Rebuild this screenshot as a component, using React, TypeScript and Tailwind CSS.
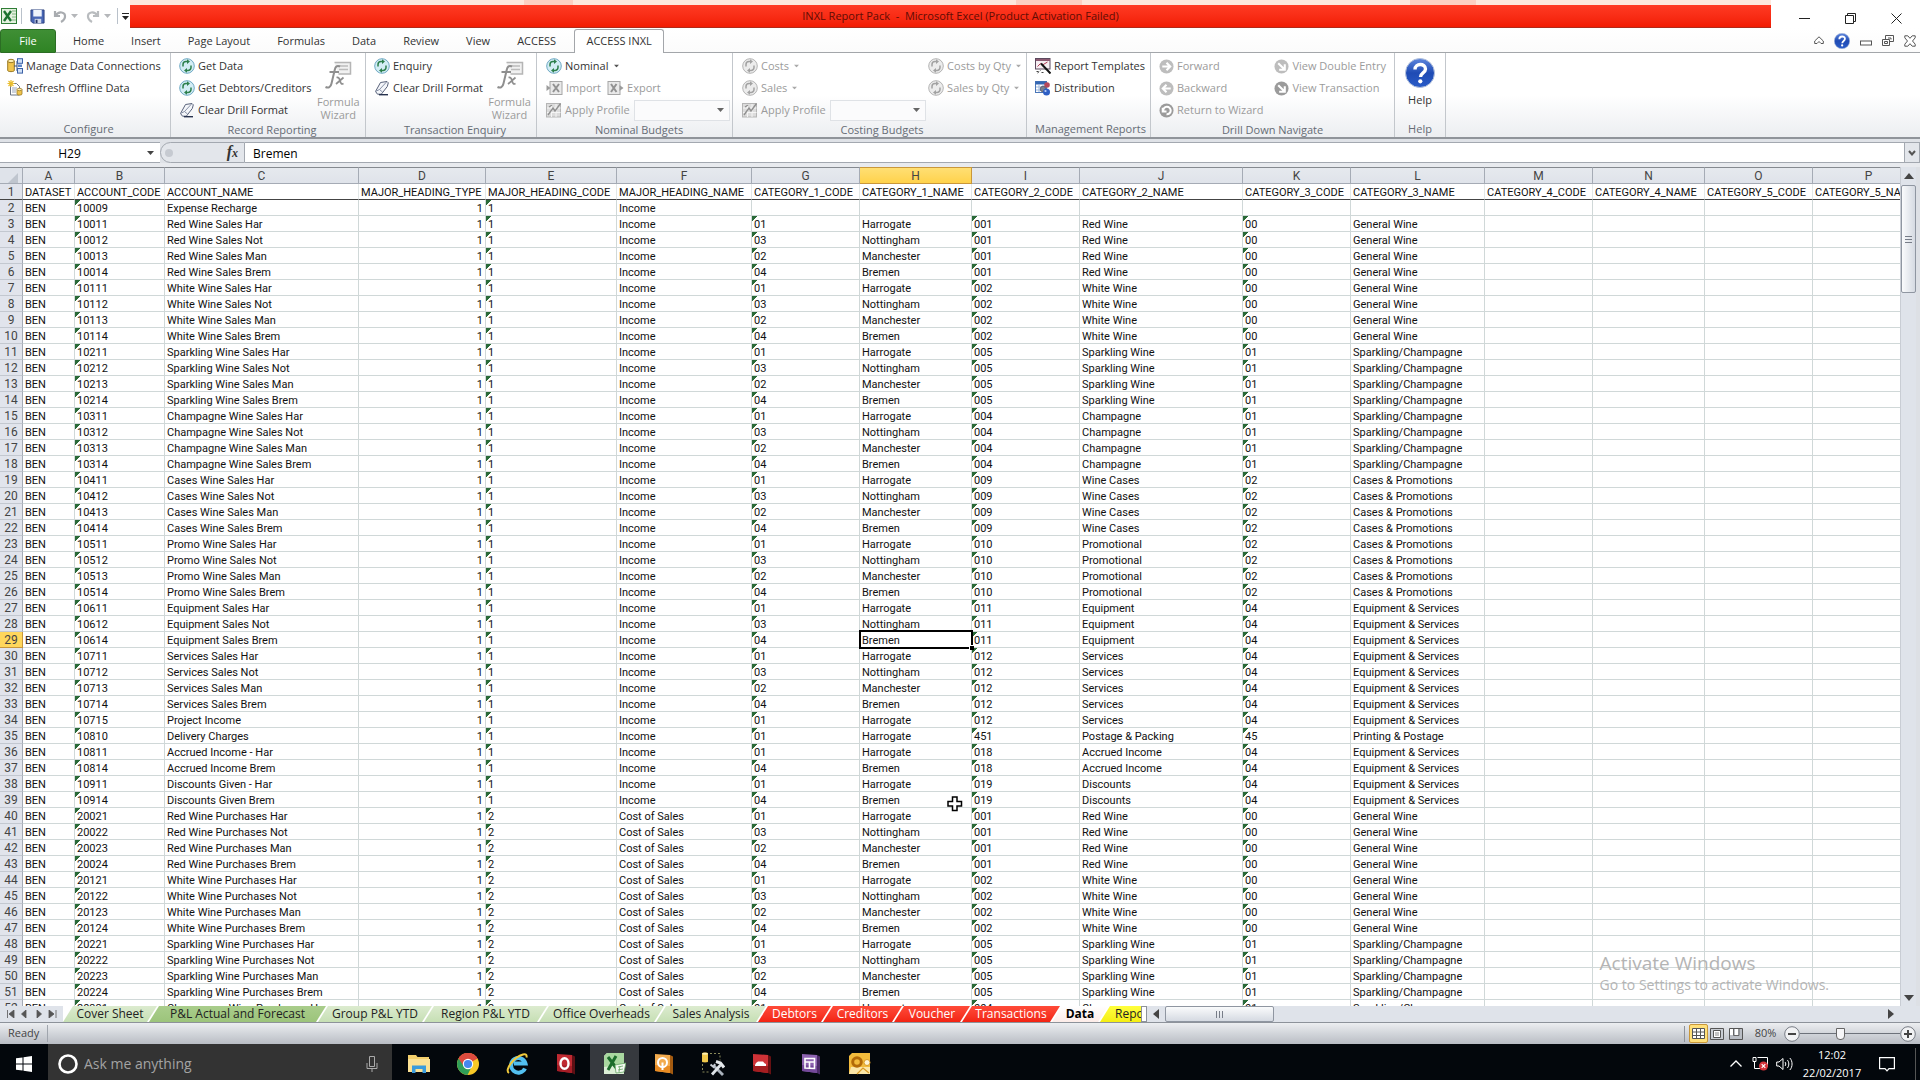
import type { ReactNode } from "react";

type Account = [code: string, name: string, region: string, category: string];

const REGIONS: Record<string, string> = { "01": "Harrogate", "02": "Manchester", "03": "Nottingham", "04": "Bremen" };

const CATEGORIES: Record<string, [string, string, string]> = {
  "001": ["Red Wine", "00", "General Wine"],
  "002": ["White Wine", "00", "General Wine"],
  "004": ["Champagne", "01", "Sparkling/Champagne"],
  "005": ["Sparkling Wine", "01", "Sparkling/Champagne"],
  "009": ["Wine Cases", "02", "Cases & Promotions"],
  "010": ["Promotional", "02", "Cases & Promotions"],
  "011": ["Equipment", "04", "Equipment & Services"],
  "012": ["Services", "04", "Equipment & Services"],
  "018": ["Accrued Income", "04", "Equipment & Services"],
  "019": ["Discounts", "04", "Equipment & Services"],
  "451": ["Postage & Packing", "45", "Printing & Postage"],
};

const ACCOUNTS: Account[] = [
  ["10009", "Expense Recharge", "", ""],
  ["10011", "Red Wine Sales Har", "01", "001"],
  ["10012", "Red Wine Sales Not", "03", "001"],
  ["10013", "Red Wine Sales Man", "02", "001"],
  ["10014", "Red Wine Sales Brem", "04", "001"],
  ["10111", "White Wine Sales Har", "01", "002"],
  ["10112", "White Wine Sales Not", "03", "002"],
  ["10113", "White Wine Sales Man", "02", "002"],
  ["10114", "White Wine Sales Brem", "04", "002"],
  ["10211", "Sparkling Wine Sales Har", "01", "005"],
  ["10212", "Sparkling Wine Sales Not", "03", "005"],
  ["10213", "Sparkling Wine Sales Man", "02", "005"],
  ["10214", "Sparkling Wine Sales Brem", "04", "005"],
  ["10311", "Champagne Wine Sales Har", "01", "004"],
  ["10312", "Champagne Wine Sales Not", "03", "004"],
  ["10313", "Champagne Wine Sales Man", "02", "004"],
  ["10314", "Champagne Wine Sales Brem", "04", "004"],
  ["10411", "Cases Wine Sales Har", "01", "009"],
  ["10412", "Cases Wine Sales Not", "03", "009"],
  ["10413", "Cases Wine Sales Man", "02", "009"],
  ["10414", "Cases Wine Sales Brem", "04", "009"],
  ["10511", "Promo Wine Sales Har", "01", "010"],
  ["10512", "Promo Wine Sales Not", "03", "010"],
  ["10513", "Promo Wine Sales Man", "02", "010"],
  ["10514", "Promo Wine Sales Brem", "04", "010"],
  ["10611", "Equipment Sales Har", "01", "011"],
  ["10612", "Equipment Sales Not", "03", "011"],
  ["10614", "Equipment Sales Brem", "04", "011"],
  ["10711", "Services Sales Har", "01", "012"],
  ["10712", "Services Sales Not", "03", "012"],
  ["10713", "Services Sales Man", "02", "012"],
  ["10714", "Services Sales Brem", "04", "012"],
  ["10715", "Project Income", "01", "012"],
  ["10810", "Delivery Charges", "01", "451"],
  ["10811", "Accrued Income - Har", "01", "018"],
  ["10814", "Accrued Income Brem", "04", "018"],
  ["10911", "Discounts Given - Har", "01", "019"],
  ["10914", "Discounts Given Brem", "04", "019"],
  ["20021", "Red Wine Purchases Har", "01", "001"],
  ["20022", "Red Wine Purchases Not", "03", "001"],
  ["20023", "Red Wine Purchases Man", "02", "001"],
  ["20024", "Red Wine Purchases Brem", "04", "001"],
  ["20121", "White Wine Purchases Har", "01", "002"],
  ["20122", "White Wine Purchases Not", "03", "002"],
  ["20123", "White Wine Purchases Man", "02", "002"],
  ["20124", "White Wine Purchases Brem", "04", "002"],
  ["20221", "Sparkling Wine Purchases Har", "01", "005"],
  ["20222", "Sparkling Wine Purchases Not", "03", "005"],
  ["20223", "Sparkling Wine Purchases Man", "02", "005"],
  ["20224", "Sparkling Wine Purchases Brem", "04", "005"],
  ["20321", "Champagne Wine Purchases Har", "01", "004"],
];

const COLUMNS = [
  { letter: "A", width: 52, title: "DATASET" },
  { letter: "B", width: 90, title: "ACCOUNT_CODE" },
  { letter: "C", width: 194, title: "ACCOUNT_NAME" },
  { letter: "D", width: 127, title: "MAJOR_HEADING_TYPE" },
  { letter: "E", width: 131, title: "MAJOR_HEADING_CODE" },
  { letter: "F", width: 135, title: "MAJOR_HEADING_NAME" },
  { letter: "G", width: 108, title: "CATEGORY_1_CODE" },
  { letter: "H", width: 112, title: "CATEGORY_1_NAME" },
  { letter: "I", width: 108, title: "CATEGORY_2_CODE" },
  { letter: "J", width: 163, title: "CATEGORY_2_NAME" },
  { letter: "K", width: 108, title: "CATEGORY_3_CODE" },
  { letter: "L", width: 134, title: "CATEGORY_3_NAME" },
  { letter: "M", width: 108, title: "CATEGORY_4_CODE" },
  { letter: "N", width: 112, title: "CATEGORY_4_NAME" },
  { letter: "O", width: 108, title: "CATEGORY_5_CODE" },
  { letter: "P", width: 112, title: "CATEGORY_5_NAME" },
];

const TEXT_NUMBER_COLUMNS = ["B", "E", "G", "I", "K"];

function cellsFor([code, name, region, category]: Account): string[] {
  const income = code.startsWith("1");
  const [catName, cat3, cat3Name] = CATEGORIES[category] ?? ["", "", ""];
  return [
    "BEN", code, name, "1", income ? "1" : "2", income ? "Income" : "Cost of Sales",
    region, REGIONS[region] ?? "", category, catName, cat3, cat3Name, "", "", "", "",
  ];
}

/* ---------- icons ---------- */

function RefreshIcon({ off }: { off?: boolean }) {
  const ring = off ? "#b4b4b4" : "#6fa9c4";
  const arrow = off ? "#a2a2a2" : "#2c7f4c";
  return (
    <svg viewBox="0 0 16 16" className="size-4 shrink-0">
      <circle cx="8" cy="8" r="7.3" fill={off ? "#ececec" : "#d3edf5"} stroke={ring} />
      <path d="M8.5 3.5H7a3 3 0 0 0-3 3v2M7.5 12.5H9a3 3 0 0 0 3-3v-2" fill="none" stroke={arrow} strokeWidth="1.5" />
      <path d="M8 1.2 11 3.6 8 6zM8 10 5 12.4 8 14.8z" fill={arrow} />
    </svg>
  );
}

function EraserIcon() {
  return (
    <svg viewBox="0 0 16 16" className="size-4 shrink-0">
      <path d="M6.5 2.5 13 1.5l1.3 1.3-1 3.7-6 7.7H3.5l-2-2.7z" fill="#f4f6fa" stroke="#59627a" />
      <path d="M1.5 11.5l4-2 3 2.500M5.5 9.5l7-7.500" fill="none" stroke="#8791a6" />
      <path d="M5 14.7h9" stroke="#27324e" strokeWidth="1.4" />
    </svg>
  );
}

function ConnectionsIcon() {
  return (
    <svg viewBox="0 0 16 16" className="size-4 shrink-0">
      <path d="M.7 3v9.500c0 1.500 6.600 1.500 6.600 0V3" fill="#f0c44c" stroke="#9a7a25" />
      <ellipse cx="4" cy="3" rx="3.300" ry="1.700" fill="#fdeeb0" stroke="#9a7a25" />
      <path d="M7 8h3M10 3v10M10 3h1M10 13h1" stroke="#39507c" fill="none" />
      <rect x="10.500" y=".7" width="5" height="4.600" fill="#cfe0f7" stroke="#3c61a5" />
      <rect x="10.500" y="10.500" width="5" height="4.600" fill="#cfe0f7" stroke="#3c61a5" />
      <path d="M11 6.500h4v2.500h-4z" fill="#5d86c9" />
    </svg>
  );
}

function OfflineIcon() {
  return (
    <svg viewBox="0 0 16 16" className="size-4 shrink-0">
      <path d="M3.500 3.500h6l3 3v8.500h-9z" fill="#fff" stroke="#6b7484" />
      <path d="M5 8h5M5 10h4M5 12h4" stroke="#9aa6ba" />
      <path d="M4 0v7M.5 3.500h7M1.500 1l5 5M6.500 1l-5 5" stroke="#e9bd2e" strokeWidth="1.200" />
      <path d="M10 9.500v4.700c0 1.200 5 1.200 5 0V9.500z" fill="#f0c44c" stroke="#9a7a25" strokeWidth=".8" />
      <ellipse cx="12.500" cy="9.500" rx="2.500" ry="1.200" fill="#fdeeb0" stroke="#9a7a25" strokeWidth=".8" />
    </svg>
  );
}

function SheetArrowIcon({ out }: { out?: boolean }) {
  return (
    <svg viewBox="0 0 17 16" className="h-4 w-[17px] shrink-0">
      <rect x={out ? 1 : 4} y="1.500" width="12" height="13" fill="#e9e9e9" stroke="#a6a6a6" />
      <path d={out ? "M4 4l5.500 8M9.500 4 4 12" : "M7 4l6 8M13 4l-6 8"} stroke="#929292" strokeWidth="2" />
      <path d={out ? "M12.500 5 16.500 8l-4 3z" : "M.5 5 4.500 8l-4 3z"} fill="#9b9b9b" />
    </svg>
  );
}

function ProfileIcon() {
  return (
    <svg viewBox="0 0 16 16" className="size-4 shrink-0">
      <rect x=".5" y="1.500" width="14" height="13.500" fill="#dcdcdc" stroke="#b5b5b5" />
      <path d="M1 6h13.500M1 10.500h13.500M5.500 2v13M10 2v13" stroke="#f5f5f5" />
      <path d="M2 13 7 6l2 3 5.500-7.500M3 5l3-2" stroke="#909090" strokeWidth="1.400" fill="none" />
    </svg>
  );
}

function TemplatesIcon() {
  return (
    <svg viewBox="0 0 16 16" className="size-4 shrink-0">
      <rect x=".5" y=".5" width="14.500" height="10.500" fill="#f6eef2" stroke="#5c4a5e" />
      <path d="M1 2h14" stroke="#8c5a72" strokeWidth="2" />
      <path d="M2.500 8.500l3-3 2 1.500 5-3" stroke="#b23a52" fill="none" />
      <path d="M1.500 13.500h2M2.500 15l3-2.500M6.500 14.500h2" stroke="#444" strokeDasharray="2 1" />
      <path d="M6 5.500l9.500 10" stroke="#141414" strokeWidth="2" />
    </svg>
  );
}

function DistributionIcon() {
  return (
    <svg viewBox="0 0 16 16" className="size-4 shrink-0">
      <rect x=".5" y="1.500" width="11" height="11" fill="#fff" stroke="#4a76b8" />
      <path d="M.5 3h11" stroke="#3467b3" strokeWidth="3" />
      <path d="M1 7h10M1 10h10M4 4v8M8 4v8" stroke="#9db7dc" />
      <circle cx="12" cy="5" r="2.800" fill="#b5485a" />
      <circle cx="8" cy="9" r="2.800" fill="#7a7f8e" stroke="#3a3f4e" strokeWidth=".6" />
      <circle cx="11.500" cy="12" r="3.500" fill="#2f5fc4" />
      <circle cx="10.500" cy="11" r="1.100" fill="#b9cff7" />
    </svg>
  );
}

function BallIcon({ d, dark }: { d: string; dark?: boolean }) {
  return (
    <svg viewBox="0 0 16 16" className="size-[15px] shrink-0">
      <circle cx="8" cy="8" r="7.500" fill={dark ? "#9b9b9b" : "#bdbdbd"} />
      <path d={d} fill="none" stroke="#fff" strokeWidth="2.200" />
    </svg>
  );
}

const RIGHT = "M3.500 8h8M8 4l4 4-4 4";
const LEFT = "M12.500 8h-8M8 4 4 8l4 4";
const BACK_LOOP = "M4 5v4h4M4.500 8.500A4 4 0 1 1 8 12";
const DOWN_RIGHT = "M4.500 4.500l6 6M11.500 5.500v6h-6";

function HelpBall({ className }: { className: string }) {
  return (
    <svg viewBox="0 0 30 30" className={className}>
      <defs>
        <linearGradient id="help" x1="0" y1="0" x2="0" y2="1">
          <stop offset="0" stopColor="#5e86dd" />
          <stop offset=".5" stopColor="#1f4bb4" />
          <stop offset="1" stopColor="#2a5cc8" />
        </linearGradient>
      </defs>
      <circle cx="15" cy="15" r="14.500" fill="url(#help)" stroke="#b4c2dc" />
      <path d="M10 11.500c0-6.500 10.500-6.500 10.500-.5 0 4-5 3.700-5 8" fill="none" stroke="#fff" strokeWidth="3.400" />
      <circle cx="15.300" cy="23.300" r="2.100" fill="#fff" />
    </svg>
  );
}

function FormulaWizardIcon() {
  return (
    <svg viewBox="0 0 28 28" className="size-7">
      <path d="M10.500 1.500h16v11.500h-12" fill="#f1f1f1" stroke="#b5b5b5" strokeWidth="1.500" />
      <path d="M14 5h10M15 8.500h9" stroke="#bcbcbc" strokeWidth="1.500" />
      <path d="M16 5.500c-3-1.500-4.500 0-5.300 3.500L7.500 22.500C6.800 26 4.500 27.500 1.500 26M5.500 11h9.500" fill="none" stroke="#8f8f8f" strokeWidth="2" />
      <path d="M12.500 16.500c3-.8 3 1.500 3.800 4s1.200 3 3.200 2M19.500 16.500l-7.500 6.500" fill="none" stroke="#8f8f8f" strokeWidth="1.700" />
    </svg>
  );
}

function Caret({ className = "text-[#777]" }: { className?: string }) {
  return (
    <svg viewBox="0 0 7 4" className={`h-1 w-[7px] shrink-0 ${className}`}>
      <path d="M0 0h7L3.500 4z" fill="currentColor" />
    </svg>
  );
}

function ScrollArrow({ className = "" }: { className?: string }) {
  return (
    <svg viewBox="0 0 10 6" className={`h-1.5 w-2.5 shrink-0 text-[#444] ${className}`}>
      <path d="M0 0h10L5 6z" fill="currentColor" />
    </svg>
  );
}

/* ---------- title bar and ribbon ---------- */

function TitleBar() {
  return (
    <header className="flex h-7 shrink-0 bg-white">
      <div className="flex w-[130px] shrink-0 items-center pt-1">
        <svg viewBox="0 0 16 16" className="ml-px size-4 shrink-0">
          <rect x=".5" y=".5" width="15" height="15" fill="#e4f1df" stroke="#2f7d36" />
          <path d="M11 3h4M11 6h4M11 9h4M11 12h4" stroke="#82b582" />
          <path d="M3 3l7 10M10 3 3 13" stroke="#1d7230" strokeWidth="2.400" />
        </svg>
        <span className="mx-1 h-4 w-px bg-[#b9c1ca]" />
        <button aria-label="Save" className="ml-1">
          <svg viewBox="0 0 16 16" className="size-[15px]">
            <path d="M1 1h14v14H3l-2-2z" fill="#4866b4" stroke="#2a3f7d" />
            <path d="M3.500 1h9v7h-9z" fill="#eef3fb" />
            <path d="M5 10.500h7V15H5z" fill="#cfd8ea" />
            <path d="M6 11.500h2V15H6z" fill="#27376b" />
          </svg>
        </button>
        <button aria-label="Undo" className="ml-2 flex items-center gap-1">
          <svg viewBox="0 0 14 14" className="size-3.5">
            <path d="M2 2v5h5M2.500 6.500C6 1.500 12.500 3 12 8c-.3 2.500-2 4-4 5" fill="none" stroke="#a9acb0" strokeWidth="2.200" />
          </svg>
          <Caret className="text-[#b5b7ba]" />
        </button>
        <button aria-label="Redo" className="ml-2 flex items-center gap-1">
          <svg viewBox="0 0 14 14" className="size-3.5 -scale-x-100">
            <path d="M2 2v5h5M2.500 6.500C6 1.500 12.500 3 12 8c-.3 2.500-2 4-4 5" fill="none" stroke="#b9bcbf" strokeWidth="2.200" />
          </svg>
          <Caret className="text-[#b5b7ba]" />
        </button>
        <span className="ml-1.5 h-4 w-px bg-[#b9c1ca]" />
        <button aria-label="Customize Quick Access Toolbar" className="ml-1 flex flex-col items-center gap-0.5">
          <span className="h-px w-[7px] bg-[#222]" />
          <Caret className="text-[#222]" />
        </button>
      </div>
      <div className="flex flex-1 flex-col">
        <div className="h-[5px] bg-[linear-gradient(90deg,#fde8dc_24%,#fcd0c2_24%,#fcd0c2_27%,#fde8dc_27%,#fde8dc_54%,#fcd0c2_54%,#fcd0c2_58%,#fde8dc_58%,#fde8dc_78%,#fcd0c2_78%,#fcd0c2_82%,#fde8dc_82%)]" />
        <div className="flex flex-1 items-center justify-center border-b border-[#b02a1a] bg-linear-to-b from-[#ff3a22] to-[#f21b02]">
          <h1 className="pt-px pl-5 text-[11px] whitespace-pre text-[#5f0d05]">
            INXL Report Pack  -  Microsoft Excel (Product Activation Failed)
          </h1>
        </div>
      </div>
      <div className="flex w-[149px] shrink-0 items-center gap-[35px] pt-2 pl-7 text-[#222]">
        <button aria-label="Minimize">
          <svg viewBox="0 0 11 11" className="size-[11px]"><path d="M0 5.500h11" stroke="currentColor" /></svg>
        </button>
        <button aria-label="Restore">
          <svg viewBox="0 0 11 11" className="size-[11px]">
            <path d="M.5 2.500h8v8h-8zM2.500 2.500v-2h8v8h-2" fill="none" stroke="currentColor" />
          </svg>
        </button>
        <button aria-label="Close">
          <svg viewBox="0 0 11 11" className="size-[11px]"><path d="M.5.5l10 10M10.500.5l-10 10" stroke="currentColor" /></svg>
        </button>
      </div>
    </header>
  );
}

const TABS = ["Home", "Insert", "Page Layout", "Formulas", "Data", "Review", "View", "ACCESS"];

function RibbonTabs() {
  return (
    <nav className="flex h-[25px] shrink-0 items-stretch bg-linear-to-b from-white to-[#fbfbfb] pt-px text-[11px] text-[#333]">
      <button className="w-14 rounded-t-[3px] border border-[#2b6d24] bg-linear-to-b from-[#3f8f35] to-[#2f8424] text-white">File</button>
      <div className="flex gap-[27px] border-b border-[#a3a6aa] pt-px pr-[18px] pl-[17px]">
        {TABS.map((tab) => (
          <button key={tab}>{tab}</button>
        ))}
      </div>
      <button className="w-[90px] rounded-t-[3px] border border-b-0 border-[#a3a6aa] bg-white">ACCESS INXL</button>
      <div className="flex flex-1 items-center justify-end gap-2.5 border-b border-[#a3a6aa] pr-1 text-[#555]">
        <button aria-label="Minimize the Ribbon">
          <svg viewBox="0 0 10 9" className="h-[9px] w-2.5">
            <path d="M5 .8 9.300 5v2.500H7L5 5.500 3 7.500H.7V5z" fill="#fff" stroke="currentColor" />
          </svg>
        </button>
        <button aria-label="Excel Help">
          <HelpBall className="size-4" />
        </button>
        <button aria-label="Minimize workbook">
          <svg viewBox="0 0 12 6" className="mt-1 h-1.5 w-3"><rect x=".5" y="1" width="11" height="4" fill="#fff" stroke="currentColor" /></svg>
        </button>
        <button aria-label="Restore workbook">
          <svg viewBox="0 0 12 12" className="size-3">
            <path d="M3.500 4V.5h8v6H8" fill="none" stroke="currentColor" />
            <path d="M.5 4.500h7v6h-7zM2.500 6.500h3v2h-3zM6 3h3v1.500" fill="none" stroke="currentColor" />
          </svg>
        </button>
        <button aria-label="Close workbook">
          <svg viewBox="0 0 12 12" className="size-3">
            <path d="M.8.8h3L6 3.300 8.200.8h3v2L8.500 6l2.700 3.200v2h-3L6 8.700 3.800 11.200h-3v-2L3.500 6 .8 2.800z" fill="#fff" stroke="currentColor" />
          </svg>
        </button>
      </div>
    </nav>
  );
}

function Command({ icon, label, off, menu }: { icon: ReactNode; label: string; off?: boolean; menu?: boolean }) {
  return (
    <button disabled={off} className={`flex h-[22px] items-center gap-[3px] whitespace-nowrap ${off ? "text-[#9b9b9b]" : "text-[#333]"}`}>
      {icon}
      {label}
      {menu && <Caret className={`ml-px scale-75 ${off ? "text-[#aaa]" : "text-[#555]"}`} />}
    </button>
  );
}

function Group({ title, className, children }: { title: string; className: string; children: ReactNode }) {
  return (
    <section className={`flex shrink-0 flex-col border-r border-[#c3c7cc] pt-0.5 ${className}`}>
      <div className="flex flex-1">{children}</div>
      <h2 className="h-[17px] text-center leading-[17px] whitespace-nowrap text-[#666c75]">{title}</h2>
    </section>
  );
}

function FormulaWizard() {
  return (
    <button disabled className="flex w-[54px] flex-col items-center pt-1.5 leading-[13px] text-[#9b9b9b]">
      <FormulaWizardIcon />
      <span className="mt-1.5">Formula</span>
      <span>Wizard</span>
    </button>
  );
}

function ApplyProfile({ name }: { name: string }) {
  return (
    <div className="flex items-center gap-1">
      <Command icon={<ProfileIcon />} label="Apply Profile" off />
      <span className="relative flex items-center">
        <select aria-label={name} disabled className="h-[21px] w-24 appearance-none border border-[#dfe2e6] bg-[#fbfbfc]" />
        <span className="pointer-events-none absolute right-1.5">
          <Caret className="text-[#666]" />
        </span>
      </span>
    </div>
  );
}

function Ribbon() {
  return (
    <div className="flex h-[86px] shrink-0 border-b-2 border-[#90949a] bg-linear-to-b from-white from-50% to-[#eceef1] text-[11px]">
      <Group title="Configure" className="w-[171px] pl-[7px]">
        <div>
          <Command icon={<ConnectionsIcon />} label="Manage Data Connections" />
          <Command icon={<OfflineIcon />} label="Refresh Offline Data" />
        </div>
      </Group>
      <Group title="Record Reporting" className="w-[195px] pl-2">
        <div className="flex-1">
          <Command icon={<RefreshIcon />} label="Get Data" />
          <Command icon={<RefreshIcon />} label="Get Debtors/Creditors" />
          <Command icon={<EraserIcon />} label="Clear Drill Format" />
        </div>
        <FormulaWizard />
      </Group>
      <Group title="Transaction Enquiry" className="w-[171px] pl-2">
        <div className="flex-1">
          <Command icon={<RefreshIcon />} label="Enquiry" />
          <Command icon={<EraserIcon />} label="Clear Drill Format" />
        </div>
        <FormulaWizard />
      </Group>
      <Group title="Nominal Budgets" className="w-[196px] pl-[9px]">
        <div>
          <Command icon={<RefreshIcon />} label="Nominal" menu />
          <div className="flex gap-1.5">
            <Command icon={<SheetArrowIcon />} label="Import" off />
            <Command icon={<SheetArrowIcon out />} label="Export" off />
          </div>
          <ApplyProfile name="Nominal profile" />
        </div>
      </Group>
      <Group title="Costing Budgets" className="w-[294px] pr-1 pl-[9px]">
        <div className="flex-1">
          <Command icon={<RefreshIcon off />} label="Costs" off menu />
          <Command icon={<RefreshIcon off />} label="Sales" off menu />
          <ApplyProfile name="Costing profile" />
        </div>
        <div>
          <Command icon={<RefreshIcon off />} label="Costs by Qty" off menu />
          <Command icon={<RefreshIcon off />} label="Sales by Qty" off menu />
        </div>
      </Group>
      <Group title="Management Reports" className="w-[124px] px-2">
        <div>
          <Command icon={<TemplatesIcon />} label="Report Templates" />
          <Command icon={<DistributionIcon />} label="Distribution" />
        </div>
      </Group>
      <Group title="Drill Down Navigate" className="w-[244px] px-2">
        <div className="flex-1">
          <Command icon={<BallIcon d={RIGHT} />} label="Forward" off />
          <Command icon={<BallIcon d={LEFT} />} label="Backward" off />
          <Command icon={<BallIcon d={BACK_LOOP} dark />} label="Return to Wizard" off />
        </div>
        <div>
          <Command icon={<BallIcon d={DOWN_RIGHT} />} label="View Double Entry" off />
          <Command icon={<BallIcon d={DOWN_RIGHT} dark />} label="View Transaction" off />
        </div>
      </Group>
      <Group title="Help" className="w-[51px]">
        <button className="flex flex-1 flex-col items-center gap-1 pt-[3px] text-[#333]">
          <HelpBall className="size-[30px]" />
          Help
        </button>
      </Group>
    </div>
  );
}

function FormulaBar() {
  return (
    <div className="flex h-7 shrink-0 items-stretch border-b-4 border-[#e8eaee] bg-[#dfe2e7] pt-[3px] text-xs">
      <div className="flex w-40 shrink-0 items-center border-y border-[#a3a8b0] bg-white pr-1.5">
        <input aria-label="Name Box" defaultValue="H29" className="w-full min-w-0 pt-0.5 pr-2 text-center" />
        <Caret className="text-[#444]" />
      </div>
      <div className="flex w-[85px] shrink-0 items-center justify-between rounded-l-full border border-[#a3a8b0] bg-[#e3e6eb] pr-1.5 pl-1">
        <span className="size-2 rounded-full bg-[#c6cad1]" />
        <button aria-label="Insert Function" className="font-['Liberation_Serif',serif] text-base leading-4 font-bold text-[#333] italic">
          f<span className="text-xs">x</span>
        </button>
      </div>
      <input aria-label="Formula Bar" defaultValue="Bremen" className="min-w-0 flex-1 border-y border-[#a3a8b0] bg-white pt-0.5 pl-2" />
      <button aria-label="Expand Formula Bar" className="flex w-4 items-center justify-center border border-[#a3a8b0] bg-[#e3e6eb]">
        <svg viewBox="0 0 8 6" className="h-1.5 w-2"><path d="M1 1l3 3.500L7 1" fill="none" stroke="#555" strokeWidth="2" /></svg>
      </button>
    </div>
  );
}

/* ---------- worksheet ---------- */

function Sheet() {
  return (
    <div className="relative min-h-0 min-w-0 flex-1 overflow-hidden bg-white">
      <table className="w-[1925px] table-fixed border-separate border-spacing-0 font-[Roboto,sans-serif] text-[11px] leading-[13px] text-[#111]">
        <colgroup>
          <col className="w-[23px]" />
          {COLUMNS.map((c) => (
            <col key={c.letter} style={{ width: c.width }} />
          ))}
        </colgroup>
        <thead>
          <tr className="h-[17px] text-[#444]">
            <th aria-label="Select all" className="border-t border-r border-b border-[#a5abb5] border-t-[#85898f] bg-[#dfe3ea] p-0">
              <svg viewBox="0 0 10 10" className="mt-1 mr-1 ml-auto size-2.5"><path d="M10 0v10H0z" fill="#bfc5ce" /></svg>
            </th>
            {COLUMNS.map((c) => (
              <th
                key={c.letter}
                className={`border-t border-r border-b p-0 pt-0.5 text-xs leading-[13px] font-normal ${
                  c.letter === "H"
                    ? "border-[#c9973a] bg-linear-to-b from-[#ffdf73] to-[#ffd24a]"
                    : "border-[#a5abb5] border-t-[#85898f] bg-linear-to-b from-[#e6e9ee] to-[#dfe3ea]"
                }`}
              >
                {c.letter}
              </th>
            ))}
          </tr>
        </thead>
        <tbody>
          <tr className="h-4">
            <th className="border-r border-b border-[#a5abb5] border-b-[#444] bg-[#e1e4ec] p-0 pt-0.5 text-xs leading-[13px] font-normal text-[#444]">1</th>
            {COLUMNS.map((c) => (
              <td key={c.letter} className="border-r border-b border-r-[#e3e8e8] border-b-[#444] p-0 pt-0.5 pl-0.5 whitespace-nowrap">
                {c.title}
              </td>
            ))}
          </tr>
          {ACCOUNTS.map((account, i) => {
            const rowNumber = i + 2;
            const active = rowNumber === 29;
            return (
              <tr key={account[0]} className="h-4">
                <th
                  className={`border-r border-b p-0 pt-0.5 text-xs leading-[13px] font-normal text-[#444] ${
                    active ? "border-[#c9973a] bg-[#ffd75c]" : "border-[#a5abb5] border-b-[#c3c8d0] bg-[#e1e4ec]"
                  }`}
                >
                  {rowNumber}
                </th>
                {cellsFor(account).map((value, j) => {
                  const { letter } = COLUMNS[j];
                  const flagged = value !== "" && TEXT_NUMBER_COLUMNS.includes(letter);
                  const selected = active && letter === "H";
                  return (
                    <td
                      key={letter}
                      className={`border-r border-b border-[#d0d8d8] p-0 px-0.5 pt-0.5 whitespace-nowrap ${letter === "D" ? "text-right" : ""} ${
                        flagged ? "bg-[linear-gradient(135deg,#2a6a38_4px,transparent_4px)]" : ""
                      } ${selected ? "relative" : ""}`}
                    >
                      {value}
                      {selected && (
                        <span className="absolute -top-0.5 -right-0.5 -bottom-0.5 -left-px border-2 border-black">
                          <span className="absolute -right-[3px] -bottom-[3px] size-[5px] border-t border-l border-white bg-black" />
                        </span>
                      )}
                    </td>
                  );
                })}
              </tr>
            );
          })}
        </tbody>
      </table>
      <div className="absolute right-[71px] bottom-[11px] text-[#b4b4b4]">
        <p className="text-[19px] leading-6">Activate Windows</p>
        <p className="text-sm leading-5">Go to Settings to activate Windows.</p>
      </div>
    </div>
  );
}

function VerticalScrollbar() {
  return (
    <div className="flex w-5 shrink-0 flex-col border-r-4 border-l border-[#c9cdd4] border-r-[#dde0e5] bg-[#dfe3ea]">
      <button aria-label="Scroll up" className="flex h-[18px] items-center justify-center">
        <ScrollArrow className="rotate-180" />
      </button>
      <div className="flex h-[108px] flex-col items-center justify-center gap-0.5 rounded-xs border border-[#8f96a1] bg-linear-to-r from-[#fafbfc] to-[#d5dae2]">
        <span className="h-px w-[7px] bg-[#777d88]" />
        <span className="h-px w-[7px] bg-[#777d88]" />
        <span className="h-px w-[7px] bg-[#777d88]" />
      </div>
      <button aria-label="Scroll down" className="mt-auto flex h-4 items-center justify-center">
        <ScrollArrow />
      </button>
    </div>
  );
}

const GREEN = "from-[#dcebcf] to-[#c6dfb4] text-[#222]";
const RED = "from-[#ff4a38] to-[#f22312] text-white";

const SHEETS = [
  { name: "Cover Sheet", width: "w-[94px]", tone: GREEN },
  { name: "P&L Actual and Forecast", width: "w-[177px]", tone: "from-[#a9cd8b] to-[#9cc47b] text-[#222]" },
  { name: "Group P&L YTD", width: "w-[114px]", tone: GREEN },
  { name: "Region P&L YTD", width: "w-[123px]", tone: GREEN },
  { name: "Office Overheads", width: "w-[125px]", tone: GREEN },
  { name: "Sales Analysis", width: "w-[110px]", tone: GREEN },
  { name: "Debtors", width: "w-[73px]", tone: RED },
  { name: "Creditors", width: "w-[79px]", tone: RED },
  { name: "Voucher", width: "w-[76px]", tone: RED },
  { name: "Transactions", width: "w-[98px]", tone: RED },
  { name: "Data", width: "w-[56px]", tone: "from-white to-[#fdece8] text-black font-bold" },
  { name: "Report", width: "w-[68px]", tone: "from-[#ffff3c] to-[#f5ee10] text-[#222]" },
];

function SheetTabs() {
  return (
    <div className="flex h-[17px] shrink-0 border-b border-[#8d929a] bg-[#dfe3ea]">
      <div className="flex w-[63px] shrink-0 items-center justify-around px-1 text-[#555]">
        {["M1.500 0v8M8 0v8L3 4z", "M6 0v8L1.500 4z", "M3 0v8l4.500-4z", "M8 0v8M1 0v8l5-4z"].map((d, i) => (
          <button key={d} aria-label={["First sheet", "Previous sheet", "Next sheet", "Last sheet"][i]}>
            <svg viewBox="0 0 9 8" className="h-2 w-[9px]"><path d={d} fill="currentColor" stroke="currentColor" strokeWidth=".8" /></svg>
          </button>
        ))}
      </div>
      <div className="flex w-[1078px] shrink-0 overflow-hidden bg-white text-xs leading-4">
        {SHEETS.map((s) => (
          <button
            key={s.name}
            className={`-mr-2 shrink-0 bg-linear-to-b whitespace-nowrap [clip-path:polygon(10px_0,100%_0,calc(100%-10px)_100%,0_100%)] ${s.width} ${s.tone}`}
          >
            {s.name}
          </button>
        ))}
      </div>
      <span className="w-1.5 border border-[#8d929a] bg-white" />
      <button aria-label="Scroll left" className="flex w-[18px] items-center justify-center">
        <ScrollArrow className="rotate-90" />
      </button>
      <div className="flex w-[109px] items-center justify-center gap-0.5 rounded-xs border border-[#8f96a1] bg-linear-to-b from-[#fafbfc] to-[#d5dae2]">
        <span className="h-[7px] w-px bg-[#777d88]" />
        <span className="h-[7px] w-px bg-[#777d88]" />
        <span className="h-[7px] w-px bg-[#777d88]" />
      </div>
      <button aria-label="Scroll right" className="mr-6 ml-auto">
        <ScrollArrow className="-rotate-90" />
      </button>
    </div>
  );
}

function StatusBar() {
  return (
    <div className="flex h-[21px] shrink-0 items-center bg-linear-to-b from-[#eceef1] to-[#b9bdc4] text-[11px] text-[#444]">
      <span className="w-12 border-r border-[#a0a5ad] pl-2">Ready</span>
      <span className="ml-auto h-4 w-px bg-[#8d929a]" />
      <div className="ml-1 flex items-center">
        <button aria-label="Normal view" className="flex size-[19px] items-center justify-center rounded-xs border border-[#c9973a] bg-[#ffe07a]">
          <svg viewBox="0 0 13 11" className="h-[11px] w-[13px]">
            <path d="M.5.500h12v10H.500zM.500 4h12M.500 7.500h12M4.500.500v10M8.500.500v10" fill="#fff" stroke="#555" />
          </svg>
        </button>
        <button aria-label="Page layout view" className="ml-0.5">
          <svg viewBox="0 0 14 12" className="h-3 w-3.5">
            <path d="M.500.500h13v11H.500z" fill="#c9cdd3" stroke="#555" />
            <path d="M3.500 2.500h7v7h-7z" fill="#fff" stroke="#555" />
            <path d="M5 5h4M5 7h4" stroke="#888" />
          </svg>
        </button>
        <button aria-label="Page break preview" className="ml-[5px]">
          <svg viewBox="0 0 14 12" className="h-3 w-3.5">
            <path d="M.500.500h13v11H.500z" fill="#b9bdc4" stroke="#555" />
            <path d="M1 1h3v6H1zM6 1h3v6H6z" fill="#fff" />
            <path d="M4.500 1v6.500H10V1" fill="none" stroke="#666" />
          </svg>
        </button>
      </div>
      <button className="mr-1 ml-2 w-[29px]">80%</button>
      <ZoomButton label="Zoom out" d="M4 8h8" />
      <input
        type="range"
        aria-label="Zoom"
        min="10"
        max="400"
        defaultValue="164"
        className="h-4 w-[100px] appearance-none bg-[linear-gradient(#6d727a,#6d727a)] bg-[length:100%_1px] bg-center bg-no-repeat [&::-webkit-slider-thumb]:h-3 [&::-webkit-slider-thumb]:w-[9px] [&::-webkit-slider-thumb]:appearance-none [&::-webkit-slider-thumb]:rounded-b-[4px] [&::-webkit-slider-thumb]:border [&::-webkit-slider-thumb]:border-[#666] [&::-webkit-slider-thumb]:bg-[#f6f6f8]"
      />
      <ZoomButton label="Zoom in" d="M4 8h8M8 4v8" />
      <span className="w-1" />
    </div>
  );
}

function ZoomButton({ label, d }: { label: string; d: string }) {
  return (
    <button aria-label={label}>
      <svg viewBox="0 0 16 16" className="size-4">
        <circle cx="8" cy="8" r="7.300" fill="#f1f2f4" stroke="#777c85" />
        <path d={d} stroke="#444" strokeWidth="2" />
      </svg>
    </button>
  );
}

/* ---------- taskbar ---------- */

function Badge({ from, to, side, children }: { from: string; to: string; side: string; children: ReactNode }) {
  return (
    <svg viewBox="0 0 22 22" className="size-[22px]">
      <path d="M2 1l15 1v18L2 18z" fill={from} />
      <path d="M17 2l3 1.500v18L17 20z" fill={side} />
      <path d="M2 12l15 1v7L2 18z" fill={to} />
      {children}
    </svg>
  );
}

const APPS: { name: string; active?: boolean; icon: ReactNode }[] = [
  {
    name: "File Explorer",
    icon: (
      <svg viewBox="0 0 22 20" className="h-5 w-[22px]">
        <path d="M0 1h8l1.500 2H21v15H0z" fill="#f3cf6c" />
        <path d="M0 5h22v13H0z" fill="#fbe194" />
        <path d="M4 11.500h14V19h-3.500v-4h-7v4H4z" fill="#3a9bdc" />
      </svg>
    ),
  },
  {
    name: "Google Chrome",
    icon: (
      <svg viewBox="0 0 22 22" className="size-[22px]">
        <circle cx="11" cy="11" r="11" fill="#f9c927" />
        <path d="M11 11 1.500 5.500A11 11 0 0 1 20.500 5.500z" fill="#dd4b3e" />
        <path d="M11 11 1.500 5.500A11 11 0 0 0 10.500 22L15 13z" fill="#2f9e58" />
        <path d="M11 6h9.800a11 11 0 0 0-19.300-.5L6 12z" fill="#dd4b3e" />
        <circle cx="11" cy="11" r="5.200" fill="#fff" />
        <circle cx="11" cy="11" r="4.100" fill="#4587ee" />
      </svg>
    ),
  },
  {
    name: "Internet Explorer",
    icon: (
      <svg viewBox="0 0 22 22" className="size-[22px]">
        <path d="M19 15.500a7.300 7.300 0 1 1 .5-5H8" fill="none" stroke="#52bff0" strokeWidth="4" />
        <path d="M3 20C-2 17 8 4 17 1.500c3-.8 4 .5 3.500 3" fill="none" stroke="#f0c93c" strokeWidth="2" />
      </svg>
    ),
  },
  {
    name: "Finance",
    icon: (
      <Badge from="#c02a32" to="#a51d26" side="#5e1015">
        <ellipse cx="9.500" cy="10.500" rx="4" ry="5.300" fill="none" stroke="#fff" strokeWidth="2.400" />
      </Badge>
    ),
  },
  {
    name: "Excel",
    active: true,
    icon: (
      <svg viewBox="0 0 22 22" className="size-[22px]">
        <path d="M3 0h17v21H0V3z" fill="#dcefd6" />
        <path d="M3 0h17v12L0 14V3z" fill="#a9d79f" />
        <path d="M4 4l9 12M12 3 4 17" stroke="#1c6d2b" strokeWidth="3" />
        <path d="M11 12l11-2-2 9-8 1z" fill="#f4faf2" stroke="#66a565" strokeWidth=".8" />
        <path d="M14 14l5-1M14 17l5-1M16 13l-1 6" stroke="#66a565" strokeWidth=".8" />
      </svg>
    ),
  },
  {
    name: "Access Client",
    icon: (
      <Badge from="#f3ab4e" to="#e98b22" side="#a35a10">
        <circle cx="9.500" cy="9.500" r="4.500" fill="none" stroke="#fff" strokeWidth="2" />
        <path d="M8.500 9.500h2V17h-2z" fill="#fff" />
      </Badge>
    ),
  },
  {
    name: "Database Tools",
    icon: (
      <svg viewBox="0 0 24 24" className="size-6">
        <path d="M1 1.500c0-1.200 6-1.200 6 0v8c0 1.200-6 1.200-6 0z" fill="#f1c84b" />
        <ellipse cx="4" cy="1.800" rx="3" ry="1" fill="#fdf0b4" />
        <path d="M9 1.500h10v7M1.500 12v8h8" fill="none" stroke="#8a8a5a" strokeDasharray="2 2" />
        <path d="M12.500 13.500 22 23" stroke="#aab2bc" strokeWidth="2.800" />
        <path d="M11 22.500 19.500 13" stroke="#dfe4e9" strokeWidth="2.800" />
        <path d="M15 9.500l4.500 1.500 3.500 4.500" fill="none" stroke="#e4e8ec" strokeWidth="3" />
        <path d="M9.500 12.500l3 2.500 1.500-3" fill="none" stroke="#c8ced6" strokeWidth="2" />
      </svg>
    ),
  },
  {
    name: "Fleet",
    icon: (
      <Badge from="#cf3237" to="#a51d20" side="#661012">
        <path d="M4 12l1-2 2-1.500h5l1.500 1.800 1.500.7v2H4z" fill="#fff" />
      </Badge>
    ),
  },
  {
    name: "Planner",
    icon: (
      <Badge from="#8d63b0" to="#74489a" side="#4b2b68">
        <path d="M5 5.500h9.500v10L5 15z" fill="none" stroke="#fff" strokeWidth="1.600" />
        <path d="M5 9h9.500M9.500 9v6.500" stroke="#fff" strokeWidth="1.600" />
      </Badge>
    ),
  },
  {
    name: "Outlook",
    icon: (
      <svg viewBox="0 0 22 22" className="size-[22px]">
        <path d="M3 0h18v21H0V3z" fill="#f3bb3c" />
        <path d="M2 14h19v7H0z" fill="#fbe6a8" />
        <circle cx="8" cy="9" r="4.300" fill="none" stroke="#b36a08" strokeWidth="3" />
        <circle cx="18" cy="9.500" r="3" fill="#fff4d6" stroke="#d99a25" />
        <path d="M8 21l6-6 6 5" fill="none" stroke="#d99a25" strokeWidth="1.200" />
      </svg>
    ),
  },
];

function Taskbar() {
  return (
    <footer className="flex h-9 shrink-0 items-stretch bg-[#03070c] text-white">
      <button aria-label="Start" className="flex w-12 items-center justify-center pt-[3px]">
        <svg viewBox="0 0 16 16" className="size-4">
          <path d="M0 2.300 6.500 1.400v6.100H0zM7.500 1.200 16 0v7.500H7.500zM0 8.500h6.500v6.100L0 13.700zM7.500 8.500H16V16l-8.500-1.200z" fill="#fff" />
        </svg>
      </button>
      <label className="flex w-[344px] items-center bg-[#333] px-2.5 pt-[3px]">
        <svg viewBox="0 0 20 20" className="size-5 shrink-0"><circle cx="10" cy="10" r="8.500" fill="none" stroke="#fff" strokeWidth="2.600" /></svg>
        <input aria-label="Search" placeholder="Ask me anything" className="ml-1.5 min-w-0 flex-1 text-sm placeholder:text-[#a3a3a3]" />
        <svg viewBox="0 0 12 16" className="mr-1 h-4 w-3">
          <path d="M3.500.500h5v10h-5zM1 7v5.500h10V7M6 12.500V16" fill="none" stroke="#aaa" />
        </svg>
      </label>
      <div className="ml-0.5 flex">
        {APPS.map((app) => (
          <button key={app.name} aria-label={app.name} className={`flex w-[49px] items-center justify-center pt-[3px] ${app.active ? "bg-[#36393e]" : ""}`}>
            {app.icon}
          </button>
        ))}
      </div>
      <div className="ml-auto flex items-center pt-[3px] pr-1">
        <button aria-label="Show hidden icons">
          <svg viewBox="0 0 12 7" className="h-[7px] w-3"><path d="M.5 6.500 6 1l5.500 5.500" fill="none" stroke="#fff" strokeWidth="1.300" /></svg>
        </button>
        <svg viewBox="0 0 17 15" className="ml-2.5 h-[15px] w-[17px]">
          <path d="M5.500 1.500h10v9h-8M1 1.500h3v4H1zM2.500 6v6.500H8" fill="none" stroke="#fff" />
          <circle cx="11.500" cy="10" r="4.500" fill="#d5333a" />
          <path d="M9.700 8.200l3.600 3.600M13.300 8.200l-3.600 3.600" stroke="#fff" strokeWidth="1.200" />
        </svg>
        <svg viewBox="0 0 17 14" className="ml-[7px] h-3.5 w-[17px]">
          <path d="M.7 5v4H3l4 3.500v-11L3 5zM9 5c1 1 1 3 0 4M11.300 3c2 2 2 6 0 8M13.800 1c3 3 3 9 0 12" fill="none" stroke="#fff" />
        </svg>
        <div className="ml-2 w-[62px] text-center text-[11px] leading-[18px]">
          <p>12:02</p>
          <p>22/02/2017</p>
        </div>
        <button aria-label="Action Center" className="ml-4">
          <svg viewBox="0 0 16 16" className="size-4"><path d="M.600 1.600h14.800v11H10l-2 2.300-2-2.300H.600z" fill="none" stroke="#fff" strokeWidth="1.200" /></svg>
        </button>
        <span className="ml-5 h-8 w-px bg-[#555]" />
      </div>
    </footer>
  );
}

export default function App() {
  return (
    <div className="relative flex h-screen flex-col overflow-hidden bg-white font-['Open_Sans',sans-serif]">
      <TitleBar />
      <RibbonTabs />
      <Ribbon />
      <FormulaBar />
      <main className="flex min-h-0 flex-1">
        <Sheet />
        <VerticalScrollbar />
      </main>
      <SheetTabs />
      <StatusBar />
      <Taskbar />
      {/* cell-select mouse pointer */}
      <svg viewBox="0 0 16 16" className="pointer-events-none absolute top-[796px] left-[947px] size-4">
        <path d="M5.500 1h4.500v4.500h4.500V10H10v4.500H5.500V10H1V5.500h4.500z" fill="#fff" stroke="#000" strokeWidth="1.500" />
      </svg>
    </div>
  );
}
